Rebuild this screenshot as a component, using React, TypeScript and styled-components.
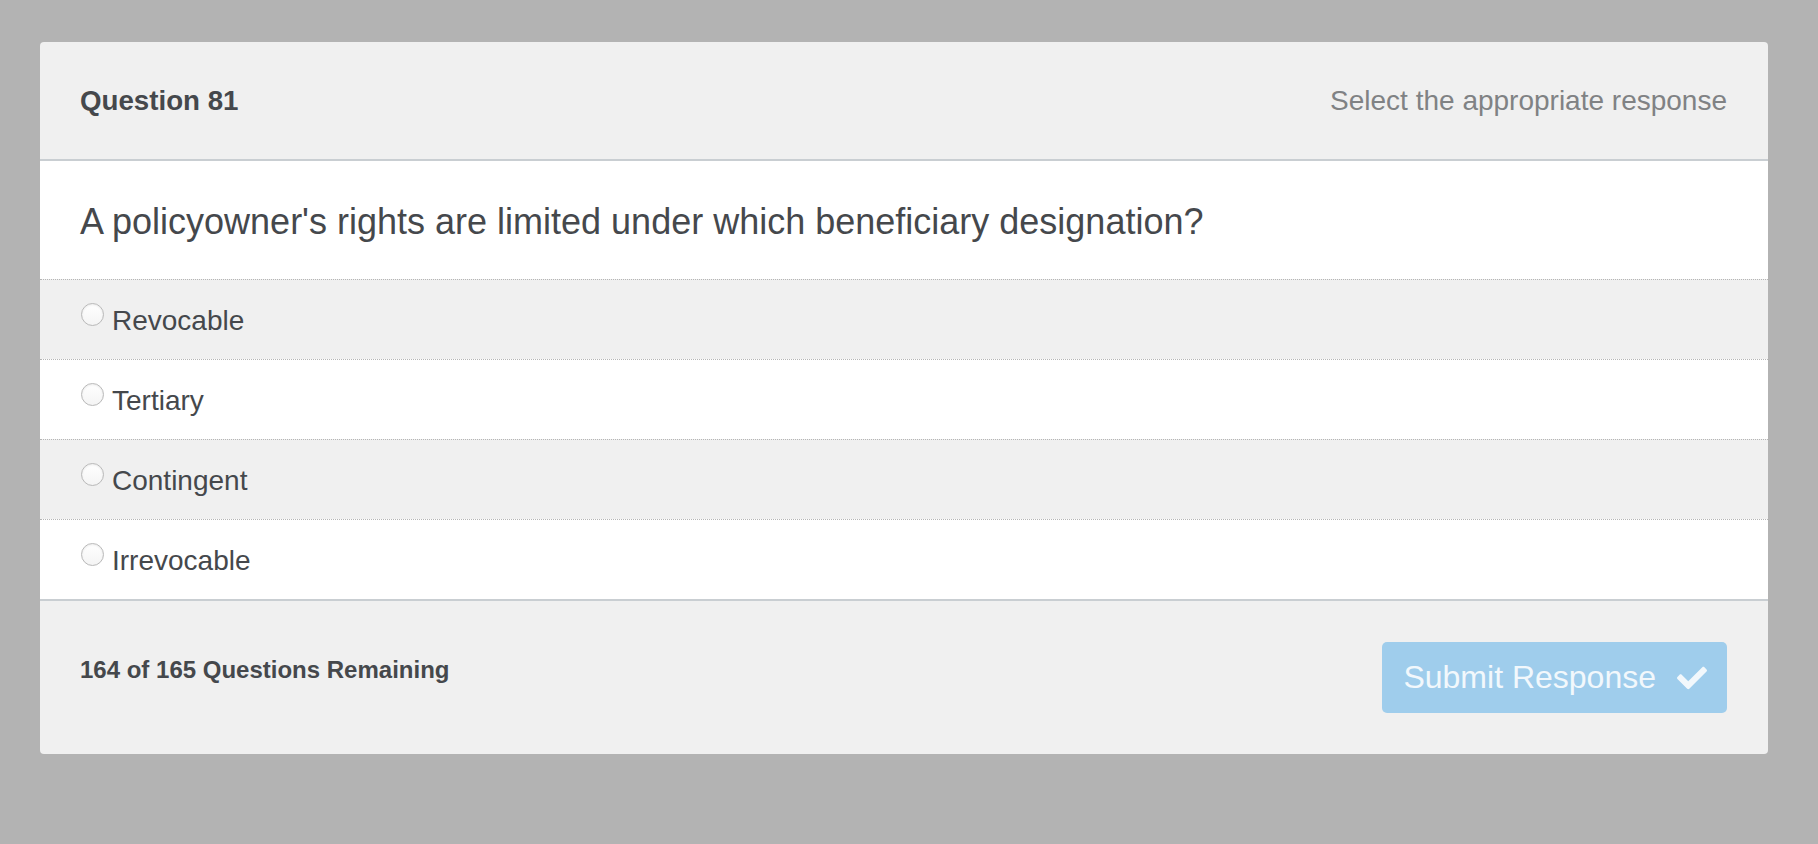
import React from 'react';
import styled, { createGlobalStyle } from 'styled-components';
import { FaCheck } from 'react-icons/fa';

const GlobalStyle = createGlobalStyle`
  html, body {
    margin: 0;
    padding: 0;
    background: #b3b3b3;
  }
  body {
    font-family: "Liberation Sans", Arial, Helvetica, sans-serif;
    color: #45484c;
  }
`;

const Page = styled.div`
  min-height: 844px;
  padding: 42px 50px 0 40px;
  box-sizing: border-box;
`;

const Card = styled.div`
  background: #f0f0f0;
  border-radius: 4px;
  overflow: hidden;
`;

const Header = styled.div`
  height: 117px;
  padding: 0 41px 0 40px;
  display: flex;
  align-items: center;
  justify-content: space-between;
  border-bottom: 2px solid #c9ced2;
`;

const QuestionNumber = styled.h2`
  margin: 0;
  font-size: 27.7px;
  font-weight: 700;
  color: #45484c;
`;

const Instruction = styled.span`
  font-size: 28px;
  color: #808284;
`;

const Prompt = styled.div`
  height: 118px;
  padding: 0 40px 0 40px;
  display: flex;
  align-items: center;
  background: #ffffff;
  font-size: 36px;
  color: #45484c;

  span {
    margin-top: 3px;
  }
`;

const OptionList = styled.div`
  display: flex;
  flex-direction: column;
`;

const OptionRow = styled.label<{ $shaded: boolean }>`
  height: 79px;
  padding: 0 40px;
  display: flex;
  align-items: center;
  border-top: 1px dotted #b5b5b5;
  background: ${({ $shaded }) => ($shaded ? '#f0f0f0' : '#ffffff')};
  font-size: 28px;
  color: #45484c;
  cursor: pointer;
`;

const OptionText = styled.span`
  margin-top: 2px;
`;

const Radio = styled.span`
  width: 21px;
  height: 21px;
  flex: none;
  margin: 0 8px 10px 1px;
  border-radius: 50%;
  border: 1px solid #b9b9b9;
  background: linear-gradient(#ffffff, #f4f4f4);
  box-shadow: inset 0 1px 2px rgba(0, 0, 0, 0.08);
`;

const Footer = styled.div`
  height: 153px;
  padding: 0 41px 0 40px;
  display: flex;
  align-items: center;
  justify-content: space-between;
  border-top: 2px solid #c9ced2;
`;

const Remaining = styled.span`
  margin-bottom: 16px;
  font-size: 24px;
  font-weight: 700;
  color: #45484c;
`;

const SubmitButton = styled.button`
  height: 71px;
  padding: 0 20px 0 21px;
  display: flex;
  align-items: center;
  gap: 21px;
  border: none;
  border-radius: 5px;
  background: #9fcdec;
  color: #f2f8fc;
  font-family: "Liberation Sans", Arial, Helvetica, sans-serif;
  font-size: 32px;
  cursor: not-allowed;

  svg {
    width: 30px;
    height: 30px;
  }
`;

const options = ['Revocable', 'Tertiary', 'Contingent', 'Irrevocable'];

const App: React.FC = () => {
  return (
    <Page>
      <GlobalStyle />
      <Card>
        <Header>
          <QuestionNumber>Question 81</QuestionNumber>
          <Instruction>Select the appropriate response</Instruction>
        </Header>

        <Prompt>
          <span>A policyowner's rights are limited under which beneficiary designation?</span>
        </Prompt>

        <OptionList>
          {options.map((option, index) => (
            <OptionRow key={option} $shaded={index % 2 === 0}>
              <Radio />
              <OptionText>{option}</OptionText>
            </OptionRow>
          ))}
        </OptionList>

        <Footer>
          <Remaining>164 of 165 Questions Remaining</Remaining>
          <SubmitButton disabled>
            Submit Response
            <FaCheck />
          </SubmitButton>
        </Footer>
      </Card>
    </Page>
  );
};

export default App;
